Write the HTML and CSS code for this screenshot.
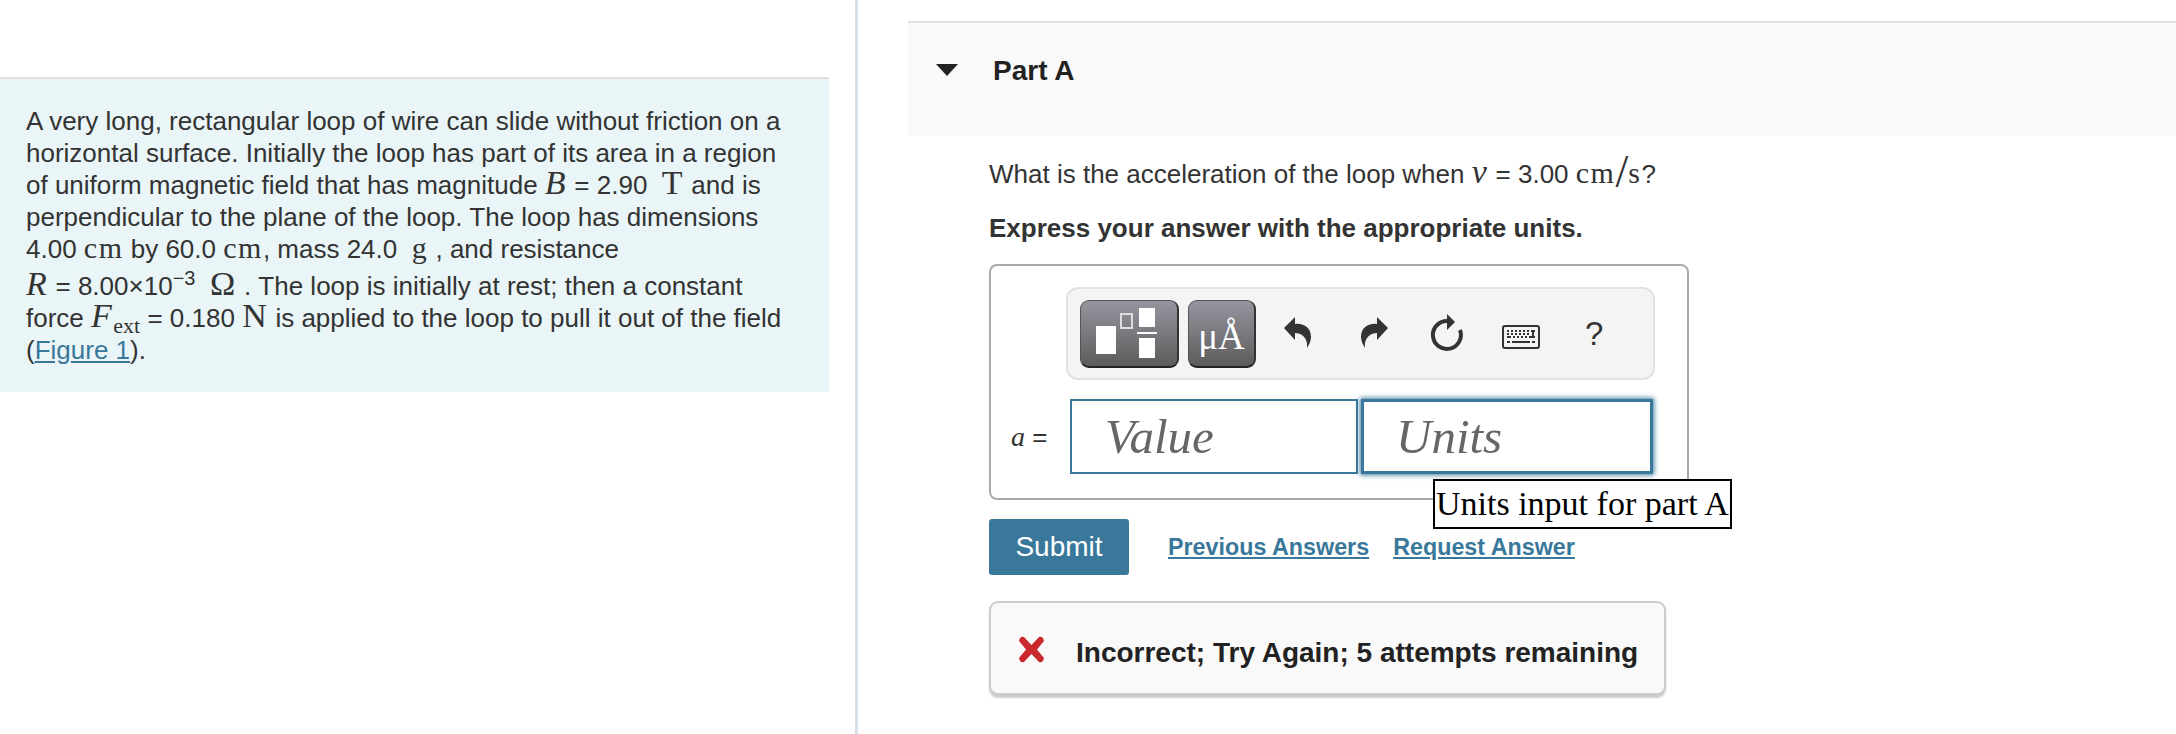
FILE: index.html
```html
<!DOCTYPE html>
<html lang="en">

<head>
   <meta charset="UTF-8" />
   <meta name="viewport" content="width=device-width, initial-scale=1.0" />
   <title>Part A</title>
   <link rel="stylesheet" href="styles.css">
</head>

<body>
   <div class="left-col">
      <div class="intro">
         <p>A very long, rectangular loop of wire can slide without friction on a<br>horizontal surface. Initially the
            loop has part of its area in a region<br>of uniform magnetic field that has magnitude
            <i class="math big">B</i> = 2.90 &nbsp;<span class="math big">T</span> and is<br>perpendicular to the plane of the
            loop. The loop has dimensions<br>4.00 <span class="math">cm</span> by 60.0 <span class="math">cm</span>,
            mass 24.0 &nbsp;<span class="math">g</span> , and resistance<br>
            <i class="math big">R</i> = 8.00×10<sup>−3</sup> &nbsp;<span class="math big">Ω</span> . The loop is initially at
            rest; then a constant<br>force <i class="math big">F</i><sub class="math-sub">ext</sub> = 0.180
            <span class="math big">N</span> is applied to the loop to pull it out of the field<br>
            (<a href="#">Figure 1</a>).
         </p>
      </div>
   </div>

   <div class="right-col">
      <div class="part-header">
         <span class="caret"></span>
         <h2>Part A</h2>
      </div>

      <div class="part-body">
         <p class="question">What is the acceleration of the loop when <i class="math big">v</i> = 3.00
            <span class="math">cm</span><span class="slash">/</span><span class="math">s</span>?</p>
         <p class="hint">Express your answer with the appropriate units.</p>

         <div class="answer-box">
            <div class="toolbar">
               <button class="tool-btn btn-template" type="button">
                  <svg width="97" height="66" viewBox="0 0 97 66">
                     <rect x="15" y="25" width="20" height="28" fill="#fff" />
                     <rect x="40" y="13" width="11" height="14" fill="none" stroke="#ddd" stroke-width="2" />
                     <rect x="58" y="7" width="16" height="19" fill="#fff" />
                     <rect x="56" y="31" width="20" height="2" fill="#fff" />
                     <rect x="58" y="37" width="16" height="20" fill="#fff" />
                  </svg>
               </button>
               <button class="tool-btn btn-units" type="button">μÅ</button>

               <svg class="icon icon-undo" width="27" height="31" viewBox="0 0 27 31">
                  <path d="M0 11 L11 0 V7 C20 6 27 11 27 20 C27 24 25 28 23 31 C24 25 21 16 11 16 V23 Z" fill="#333" />
               </svg>
               <svg class="icon icon-redo" width="27" height="31" viewBox="0 0 27 31">
                  <path d="M27 11 L16 0 V7 C7 6 0 11 0 20 C0 24 2 28 4 31 C3 25 6 16 16 16 V23 Z" fill="#333" />
               </svg>
               <svg class="icon icon-reset" width="34" height="38" viewBox="0 0 34 38">
                  <path d="M18 7 A14 14 0 1 0 30 16" fill="none" stroke="#333" stroke-width="4" />
                  <path d="M17 0 L25 8 L17 16 Z" fill="#333" />
               </svg>
               <svg class="icon icon-keys" width="38" height="24" viewBox="0 0 38 24">
                  <rect x="1" y="1" width="36" height="22" rx="2" fill="none" stroke="#333" stroke-width="2" />
                  <path d="M5 6h2M9 6h2M13 6h2M17 6h2M21 6h2M25 6h2M29 6h4M31 6v6M5 9h2M9 9h2M13 9h2M17 9h2M21 9h2M25 9h2M5 12h4M11 12h2M15 12h2M19 12h2M23 12h2M27 12h6M5 17h3M10 17h18M30 17h3"
                     stroke="#333" stroke-width="2" fill="none" />
               </svg>
               <span class="tool-help">?</span>
            </div>

            <div class="input-row">
               <label class="input-label"><i>a</i> =</label>
               <div class="field-wrap">
                  <input class="field" type="text" placeholder="Value">
               </div>
               <div class="field-wrap">
                  <input class="field field-focus" type="text" placeholder="Units">
                  <span class="tooltip">Units input for part A</span>
               </div>
            </div>
         </div>

         <div class="actions">
            <button class="submit" type="button">Submit</button>
            <a href="#">Previous Answers</a>
            <a href="#">Request Answer</a>
         </div>

         <div class="feedback">
            <svg width="27" height="27" viewBox="0 0 27 27">
               <path d="M6 1 L13.5 9 L21 1 Q23 0 25 2 L26 5 L19 13.5 L26 22 L25 25 Q23 27 21 26 L13.5 18 L6 26 Q4 27 2 25 L1 22 L8 13.5 L1 5 L2 2 Q4 0 6 1 Z"
                  fill="#c9282d" />
            </svg>
            <span class="feedback-text">Incorrect; Try Again; 5 attempts remaining</span>
         </div>
      </div>
   </div>
</body>

</html>
```

FILE: styles.css
```css
* {
   box-sizing: border-box;
}

body {
   margin: 0;
   height: 734px;
   overflow: hidden;
   display: flex;
   background: #fff;
   color: #333;
   font-family: "Liberation Sans", Arial, sans-serif;
   font-size: 26px;
}

.math {
   font-family: "Liberation Serif", "Times New Roman", serif;
   font-size: 30px;
   line-height: 0;
   letter-spacing: 1.5px;
}

.big {
   font-size: 34px;
}

.math-sub {
   font-family: "Liberation Serif", "Times New Roman", serif;
   font-size: 22px;
   line-height: 0;
}

a {
   color: #3a789b;
}

/* left column */
.left-col {
   width: 858px;
   flex-shrink: 0;
   padding-top: 77px;
   border-right: 3px solid #d5e0e8;
}

.intro {
   width: 829px;
   padding: 26px 26px 26px;
   background: #e9f5f7;
   border-top: 2px solid #e0e0e0;
   line-height: 32px;
}

.intro p {
   margin: 0;
}

.intro sup {
   font-size: 20px;
   line-height: 26px;
}

/* right column */
.right-col {
   flex: 1;
   min-width: 0;
   padding: 21px 0 0 50px;
}

.part-header {
   height: 115px;
   padding: 32px 0 0 28px;
   display: flex;
   gap: 35px;
   background: #f9f9f9;
   border-top: 2px solid #e0e0e0;
}

.part-header h2 {
   margin: 0;
   font-size: 28px;
   line-height: 32px;
   color: #222;
}

.caret {
   width: 0;
   height: 0;
   margin-top: 9px;
   border-left: 11px solid transparent;
   border-right: 11px solid transparent;
   border-top: 12px solid #222;
}

.part-body {
   padding: 22px 0 0 81px;
}

.question {
   margin: 0;
   height: 32px;
   line-height: 32px;
}

.slash {
   font-family: "Liberation Serif", serif;
   font-size: 46px;
   font-weight: 100;
   line-height: 0;
   vertical-align: -4px;
}

.hint {
   margin: 22px 0 0;
   line-height: 32px;
   font-weight: bold;
}

.answer-box {
   width: 700px;
   height: 236px;
   margin-top: 20px;
   padding: 21px 10px 0 20px;
   border: 2px solid #aaa;
   border-radius: 8px;
}

.toolbar {
   width: 589px;
   height: 93px;
   margin-left: 55px;
   padding-left: 12px;
   display: flex;
   align-items: center;
   background: #f4f4f4;
   border: 2px solid #e2e2e2;
   border-radius: 12px;
}

.tool-btn {
   height: 68px;
   padding: 0;
   color: #fff;
   background: linear-gradient(#96959f, #5c5c5c);
   border: 1px solid #555;
   border-bottom: 2px solid #222;
   border-right: 2px solid #333;
   border-radius: 9px;
}

.tool-btn svg {
   display: block;
}

.btn-template {
   width: 99px;
}

.btn-units {
   width: 68px;
   margin-left: 9px;
   font-family: "Liberation Serif", serif;
   font-size: 37px;
   line-height: 1;
   padding-top: 6px;
}

.icon-undo {
   margin: -2px 0 0 28px;
}

.icon-redo {
   margin: -2px 0 0 50px;
}

.icon-reset {
   margin: -1px 0 0 42px;
}

.icon-keys {
   margin: 7px 0 0 38px;
}

.tool-help {
   margin: 1px 0 0 45px;
   font-size: 33px;
   color: #333;
}

.input-row {
   margin-top: 19px;
   display: flex;
   align-items: center;
}

.input-label {
   width: 59px;
}

.input-label i {
   font-family: "Liberation Serif", serif;
   font-size: 28px;
}

.field-wrap {
   position: relative;
   margin-right: 3px;
}

.field {
   display: block;
   width: 288px;
   height: 75px;
   padding: 0 0 0 33px;
   background: #fff;
   border: 2px solid #3a789b;
   outline: none;
   font-family: "Liberation Serif", serif;
   font-style: italic;
   font-size: 49px;
}

.field::placeholder {
   color: #666;
   opacity: 1;
}

.field-focus {
   width: 292px;
   padding-left: 32px;
   border-width: 3px;
   box-shadow: 0 0 5px 1px #3a789b;
}

.tooltip {
   position: absolute;
   top: 80px;
   left: 72px;
   z-index: 2;
   padding: 0 1px;
   height: 50px;
   line-height: 46px;
   white-space: nowrap;
   color: #000;
   background: #fff;
   border: 2px solid #000;
   font-family: "Liberation Serif", serif;
   font-size: 34px;
}

.actions {
   margin-top: 19px;
   display: flex;
   align-items: center;
   gap: 24px;
   font-size: 23.3px;
   font-weight: bold;
}

.submit {
   width: 140px;
   height: 56px;
   margin-right: 15px;
   color: #fff;
   background: #3a789b;
   border: none;
   border-radius: 3px;
   font-family: "Liberation Sans", Arial, sans-serif;
   font-size: 28px;
}

.feedback {
   width: 677px;
   height: 94px;
   margin-top: 26px;
   padding: 3px 0 0 27px;
   display: flex;
   align-items: center;
   gap: 31px;
   color: #222;
   background: #f9f9f9;
   border: 2px solid #ccc;
   border-radius: 9px;
   box-shadow: 0 3px 2px #ccc;
   font-size: 28px;
   font-weight: bold;
}

.feedback-text {
   margin-top: 6px;
}
```
